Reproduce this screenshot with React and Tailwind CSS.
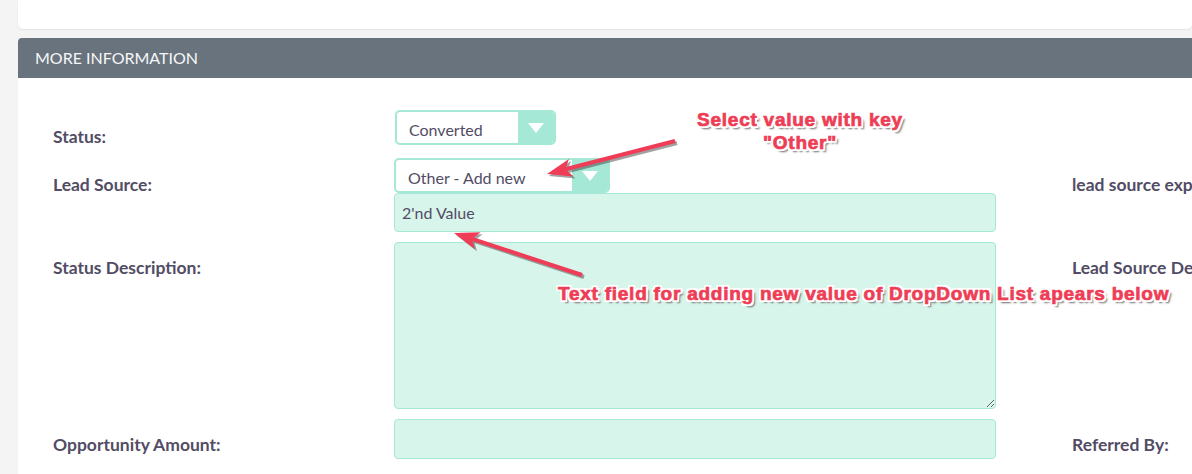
import React from 'react';

const labelCls = "w-[341px] shrink-0 text-[17.5px] font-bold text-[#524c65] leading-6 whitespace-nowrap";
const rightLabelCls = "text-[17.5px] font-bold text-[#524c65] leading-6 whitespace-nowrap";
const noteCls = "absolute text-[#ee3d55] font-bold text-[19px] tracking-[0.75px] leading-[23px] text-center whitespace-nowrap font-['Liberation_Sans',Arial,sans-serif] [-webkit-text-stroke:0.7px_#ee3d55] [text-shadow:2px_0_0_#fff,-2px_0_0_#fff,0_2px_0_#fff,0_-2px_0_#fff,2px_2px_0_#fff,-2px_-2px_0_#fff,2px_-2px_0_#fff,-2px_2px_0_#fff,3px_3px_2px_#666]";

function Caret() {
  return (
    <svg width="16" height="10" viewBox="0 0 16 10">
      <path d="M0 0 L16 0 L8 10 Z" fill="#fff" />
    </svg>
  );
}

function Select({ value, width }) {
  return (
    <div
      className="flex h-[35px] rounded-[5px] border-2 border-[#a6e8d6] bg-white overflow-hidden"
      style={{ width }}
    >
      <div className="flex-1 flex items-center pl-[12px] pt-[4px] text-[16px] text-[#524c65]">{value}</div>
      <div className="w-[36px] bg-[#a6e8d6] flex items-center justify-center">
        <Caret />
      </div>
    </div>
  );
}

// arrow with notched head, drawn from tail to tip
function Arrow({ x1, y1, x2, y2 }) {
  const dx = x2 - x1;
  const dy = y2 - y1;
  const len = Math.hypot(dx, dy);
  const ux = dx / len;
  const uy = dy / len;
  const px = -uy;
  const py = ux;
  const hl = 25;
  const hw = 9;
  const bx = x2 - ux * hl;
  const by = y2 - uy * hl;
  const nx = x2 - ux * (hl - 6);
  const ny = y2 - uy * (hl - 6);
  const head = `${x2},${y2} ${bx + px * hw},${by + py * hw} ${nx},${ny} ${bx - px * hw},${by - py * hw}`;
  return (
    <g>
      <g transform="translate(2 2)" opacity="0.45">
        <line x1={x1} y1={y1} x2={nx} y2={ny} stroke="#333" strokeWidth="4" />
        <polygon points={head} fill="#333" />
      </g>
      <line x1={x1} y1={y1} x2={nx} y2={ny} stroke="#ef3c57" strokeWidth="4" />
      <polygon points={head} fill="#ef3c57" />
    </g>
  );
}

export default function App() {
  return (
    <div className="relative w-[1192px] h-[474px] overflow-hidden bg-[#f4f4f4] pl-[18px] font-['Lato',sans-serif]">
      <div className="h-[29px] bg-white rounded-b-[5px] shadow-[0_1px_2px_rgba(0,0,0,0.07)]" />
      <div className="mt-[9px] h-[40px] bg-[#68737e] rounded-tl-[4px] flex items-center pl-[17px] text-[#f7f7f7] text-[16px]">
        MORE INFORMATION
      </div>
      <div className="bg-white h-full pl-[35px] pt-[32px]">
        {/* Status */}
        <div className="flex items-start">
          <div className={`${labelCls} pt-[15px]`}>Status:</div>
          <div className="w-[602px] shrink-0 pl-px">
            <Select value="Converted" width={161} />
          </div>
        </div>

        {/* Lead Source */}
        <div className="flex items-start mt-[9px]">
          <div className={`${labelCls} pt-[15px]`}>Lead Source:</div>
          <div className="w-[602px] shrink-0">
            <Select value="Other - Add new" width={216} />
            <div className="h-[39px] rounded-[4px] border border-[#a6e8d6] bg-[#d8f5ec] flex items-center pl-[7px] text-[16px] text-[#524c65]">
              2'nd Value
            </div>
          </div>
          <div className={`${rightLabelCls} ml-[76px] pt-[15px]`}>lead source explanation:</div>
        </div>

        {/* Status Description */}
        <div className="flex items-start mt-[10px]">
          <div className={`${labelCls} pt-[14px]`}>Status Description:</div>
          <div className="w-[602px] shrink-0">
            <textarea
              readOnly
              className="block w-[602px] h-[167px] rounded-[4px] border border-[#a6e8d6] bg-[#d8f5ec] resize-y outline-none"
            />
          </div>
          <div className={`${rightLabelCls} ml-[76px] pt-[14px]`}>Lead Source Description:</div>
        </div>

        {/* Opportunity Amount */}
        <div className="flex items-start mt-[10px]">
          <div className={`${labelCls} pt-[14px]`}>Opportunity Amount:</div>
          <div className="w-[602px] shrink-0">
            <div className="h-[40px] rounded-[4px] border border-[#a6e8d6] bg-[#d8f5ec]" />
          </div>
          <div className={`${rightLabelCls} ml-[76px] pt-[14px]`}>Referred By:</div>
        </div>
      </div>

      {/* annotations */}
      <svg className="absolute inset-0 pointer-events-none" width="1192" height="474">
        <Arrow x1={675} y1={141} x2={547} y2={174} />
        <Arrow x1={582} y1={275} x2={454} y2={233} />
      </svg>
      <div className={`${noteCls} left-[690px] top-[108px] w-[220px]`}>
        Select value with key
        <br />
        "Other"
      </div>
      <div className={`${noteCls} left-[558px] top-[282px]`}>
        Text field for adding new value of DropDown List apears below
      </div>
    </div>
  );
}
